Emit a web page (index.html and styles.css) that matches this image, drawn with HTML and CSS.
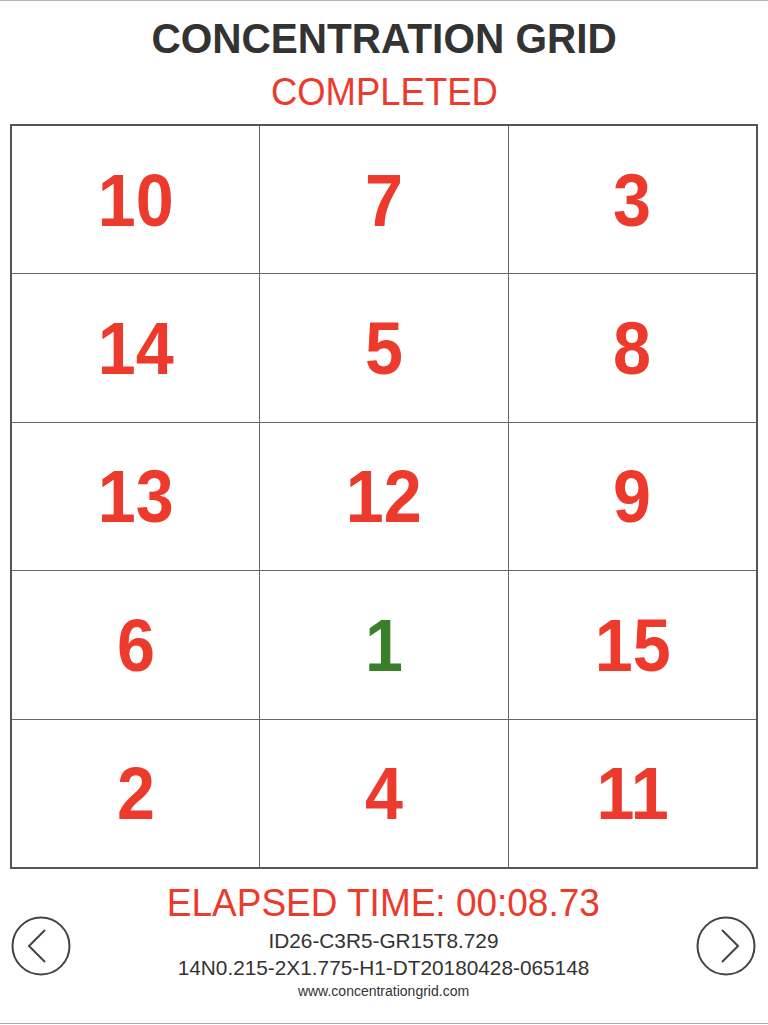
FILE: index.html
```html
<!DOCTYPE html>
<html>
<head>
<meta charset="utf-8">
<link rel="stylesheet" href="styles.css">
</head>
<body>
<div class="page">
  <h1 class="title"><span class="squeeze">CONCENTRATION GRID</span></h1>
  <div class="status"><span class="squeeze">COMPLETED</span></div>
  <div class="grid">
    <div class="cell"><span>10</span></div><div class="cell"><span>7</span></div><div class="cell"><span>3</span></div>
    <div class="cell"><span>14</span></div><div class="cell"><span>5</span></div><div class="cell"><span>8</span></div>
    <div class="cell"><span>13</span></div><div class="cell"><span>12</span></div><div class="cell"><span>9</span></div>
    <div class="cell"><span>6</span></div><div class="cell found"><span>1</span></div><div class="cell"><span>15</span></div>
    <div class="cell"><span>2</span></div><div class="cell"><span>4</span></div><div class="cell"><span>11</span></div>
  </div>
  <div class="footer">
    <div class="nav">
      <svg viewBox="0 0 60 60" width="60" height="60"><circle cx="30" cy="30" r="28.5" fill="none" stroke="#444" stroke-width="2"/><polyline points="34,14 18,30 34,46" fill="none" stroke="#444" stroke-width="2"/></svg>
    </div>
    <div class="info">
      <div class="elapsed"><span class="squeeze">ELAPSED TIME: 00:08.73</span></div>
      <div class="code first">ID26-C3R5-GR15T8.729</div>
      <div class="code">14N0.215-2X1.775-H1-DT20180428-065148</div>
      <div class="site">www.concentrationgrid.com</div>
    </div>
    <div class="nav">
      <svg viewBox="0 0 60 60" width="60" height="60"><circle cx="30" cy="30" r="28.5" fill="none" stroke="#444" stroke-width="2"/><polyline points="26,14 42,30 26,46" fill="none" stroke="#444" stroke-width="2"/></svg>
    </div>
  </div>
</div>
</body>
</html>
```
FILE: styles.css
```css
html, body {
  margin: 0;
  padding: 0;
  background: #fff;
}
body {
  font-family: "Liberation Sans", Arial, sans-serif;
}
.page {
  box-sizing: border-box;
  height: 1024px;
  border-top: 1px solid #b5b5b5;
  border-bottom: 1px solid #aaa;
  padding-top: 13px;
}
.squeeze {
  display: inline-block;
  white-space: nowrap;
}
.title {
  margin: 0;
  text-align: center;
  font-size: 42px;
  line-height: 50px;
  font-weight: bold;
  color: #333;
}
.title .squeeze {
  transform: scaleX(0.965);
}
.status {
  margin-top: 6px;
  text-align: center;
  font-size: 39px;
  line-height: 44px;
  color: #ec3a2c;
}
.status .squeeze {
  transform: scaleX(0.935);
}
.grid {
  box-sizing: border-box;
  margin: 10px 0 0 10px;
  width: 748px;
  height: 745px;
  border: 2px solid #555;
  background: #666;
  display: grid;
  grid-template-columns: repeat(3, 1fr);
  grid-template-rows: repeat(5, 1fr);
  gap: 1px;
}
.cell {
  background: #fff;
  display: flex;
  align-items: center;
  justify-content: center;
  font-size: 75px;
  font-weight: bold;
  color: #ec3a2c;
}
.cell span {
  display: inline-block;
  transform: scaleX(0.91);
}
.cell.found {
  color: #3b7e2a;
}
.footer {
  display: flex;
  align-items: flex-start;
  justify-content: space-between;
  padding: 12px 12px 0 11px;
}
.nav {
  margin-top: 35px;
  width: 60px;
  height: 60px;
}
.nav svg {
  display: block;
}
.info {
  text-align: center;
}
.elapsed {
  font-size: 39px;
  line-height: 44px;
  color: #ec3a2c;
}
.elapsed .squeeze {
  transform: scaleX(0.948);
}
.code {
  font-size: 20.8px;
  line-height: 27px;
  color: #333;
  white-space: nowrap;
}
.code.first {
  margin-top: 2px;
}
.site {
  font-size: 14px;
  line-height: 20px;
  color: #333;
}
```
